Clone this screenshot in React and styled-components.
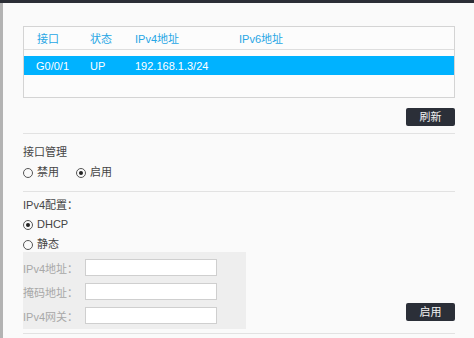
import React from 'react';
import styled, { createGlobalStyle } from 'styled-components';

const GlobalStyle = createGlobalStyle`
    html, body {
        margin: 0;
        padding: 0;
        background: #fafafa;
    }
    body {
        font-family: "Liberation Sans", Arial, "Noto Sans CJK SC", sans-serif;
        font-size: 11px;
        color: #444;
    }
`;

const columns = ['接口', '状态', 'IPv4地址', 'IPv6地址'];
const rows = [{ name: 'G0/0/1', status: 'UP', ipv4: '192.168.1.3/24', ipv6: '' }];
const fields = ['IPv4地址：', '掩码地址：', 'IPv4网关：'];

const Radio = ({ checked, children }) => (
    <RadioItem>
        <Dot checked={checked} />
        {children}
    </RadioItem>
);

const App = () => {
    return (
        <Page>
            <GlobalStyle />
            <TopBar />
            <Body>
                <Strip />
                <Main>
                    <Table>
                        <HeaderRow>
                            {columns.map((c) => (
                                <Cell key={c}>{c}</Cell>
                            ))}
                        </HeaderRow>
                        {rows.map((r) => (
                            <DataRow key={r.name} selected>
                                <Cell>{r.name}</Cell>
                                <Cell>{r.status}</Cell>
                                <Cell>{r.ipv4}</Cell>
                                <Cell>{r.ipv6}</Cell>
                            </DataRow>
                        ))}
                    </Table>
                    <ButtonRow>
                        <Button>刷新</Button>
                    </ButtonRow>
                    <Line />
                    <Section>
                        <Label>接口管理</Label>
                        <RadioGroup>
                            <Radio>禁用</Radio>
                            <Radio checked>启用</Radio>
                        </RadioGroup>
                    </Section>
                    <Line />
                    <Config>
                        <Label>IPv4配置：</Label>
                        <RadioStack>
                            <Radio checked>DHCP</Radio>
                            <Radio>静态</Radio>
                        </RadioStack>
                        <StaticRow>
                            <FieldBox>
                                {fields.map((f) => (
                                    <Field key={f}>
                                        <FieldLabel>{f}</FieldLabel>
                                        <Input />
                                    </Field>
                                ))}
                            </FieldBox>
                            <Button>启用</Button>
                        </StaticRow>
                    </Config>
                    <Line />
                </Main>
            </Body>
        </Page>
    );
};

const Page = styled.div`
    width: 474px;
    height: 338px;
    overflow: hidden;
    display: flex;
    flex-direction: column;
`;

const TopBar = styled.div`
    height: 3px;
    background: #2b2e36;
`;

const Body = styled.div`
    flex: 1;
    display: flex;
`;

const Strip = styled.div`
    width: 3px;
    background: #b3b3b3;
`;

const Main = styled.div`
    flex: 1;
    padding: 23px 19px 0 20px;
    display: flex;
    flex-direction: column;
`;

const Table = styled.div`
    height: 70px;
    border: 1px solid #d4d4d4;
    background: #fcfcfc;
`;

const HeaderRow = styled.div`
    display: grid;
    grid-template-columns: 53px 45px 104px 1fr;
    padding-left: 13px;
    height: 22px;
    align-items: center;
    border-bottom: 1px solid #dedede;
    color: #27a6e5;
    margin-bottom: 6px;
`;

const DataRow = styled.div`
    display: grid;
    grid-template-columns: 54px 45px 104px 1fr;
    padding-left: 12px;
    height: 19px;
    align-items: center;
    background: ${({ selected }) => (selected ? '#00b2ff' : 'transparent')};
    color: ${({ selected }) => (selected ? '#fff' : '#444')};
`;

const Cell = styled.span`
    white-space: nowrap;
`;

const ButtonRow = styled.div`
    display: flex;
    justify-content: flex-end;
    margin-top: 10px;
    margin-bottom: 7px;
`;

const Button = styled.button`
    width: 49px;
    height: 18px;
    padding: 0;
    border: none;
    border-radius: 2px;
    background: #2b2f38;
    color: #f2f2f2;
    font-family: "Liberation Sans", "Noto Sans CJK SC", sans-serif;
    font-size: 11px;
    line-height: 18px;
`;

const Line = styled.div`
    height: 1px;
    background: #e2e2e2;
`;

const Section = styled.div`
    padding: 11px 0 11px;
    display: flex;
    flex-direction: column;
    gap: 5px;
`;

const Label = styled.div`
    color: #444;
    line-height: 15px;
`;

const RadioGroup = styled.div`
    display: flex;
    gap: 17px;
`;

const RadioStack = styled.div`
    display: flex;
    flex-direction: column;
    gap: 5px;
    margin-top: 4px;
`;

const RadioItem = styled.label`
    display: flex;
    align-items: center;
    gap: 4px;
    line-height: 15px;
    color: #444;
`;

const Dot = styled.span`
    width: 8px;
    height: 8px;
    border: 1px solid #555;
    border-radius: 50%;
    display: flex;
    align-items: center;
    justify-content: center;
    &::after {
        content: '';
        width: 4px;
        height: 4px;
        border-radius: 50%;
        background: ${({ checked }) => (checked ? '#222' : 'transparent')};
    }
`;

const Config = styled.div`
    padding-top: 6px;
    display: flex;
    flex-direction: column;
`;

const StaticRow = styled.div`
    display: flex;
    align-items: flex-end;
    justify-content: space-between;
    margin-bottom: 4px;
    button {
        margin-bottom: 8px;
    }
`;

const FieldBox = styled.div`
    width: 223px;
    background: #eeeeee;
    padding: 7px 0 5px;
    display: flex;
    flex-direction: column;
    gap: 7px;
`;

const Field = styled.div`
    display: flex;
    align-items: center;
`;

const FieldLabel = styled.span`
    width: 62px;
    color: #a8a8a8;
`;

const Input = styled.div`
    width: 130px;
    height: 15px;
    border: 1px solid #cfcfcf;
    background: #fff;
`;

export default App;
